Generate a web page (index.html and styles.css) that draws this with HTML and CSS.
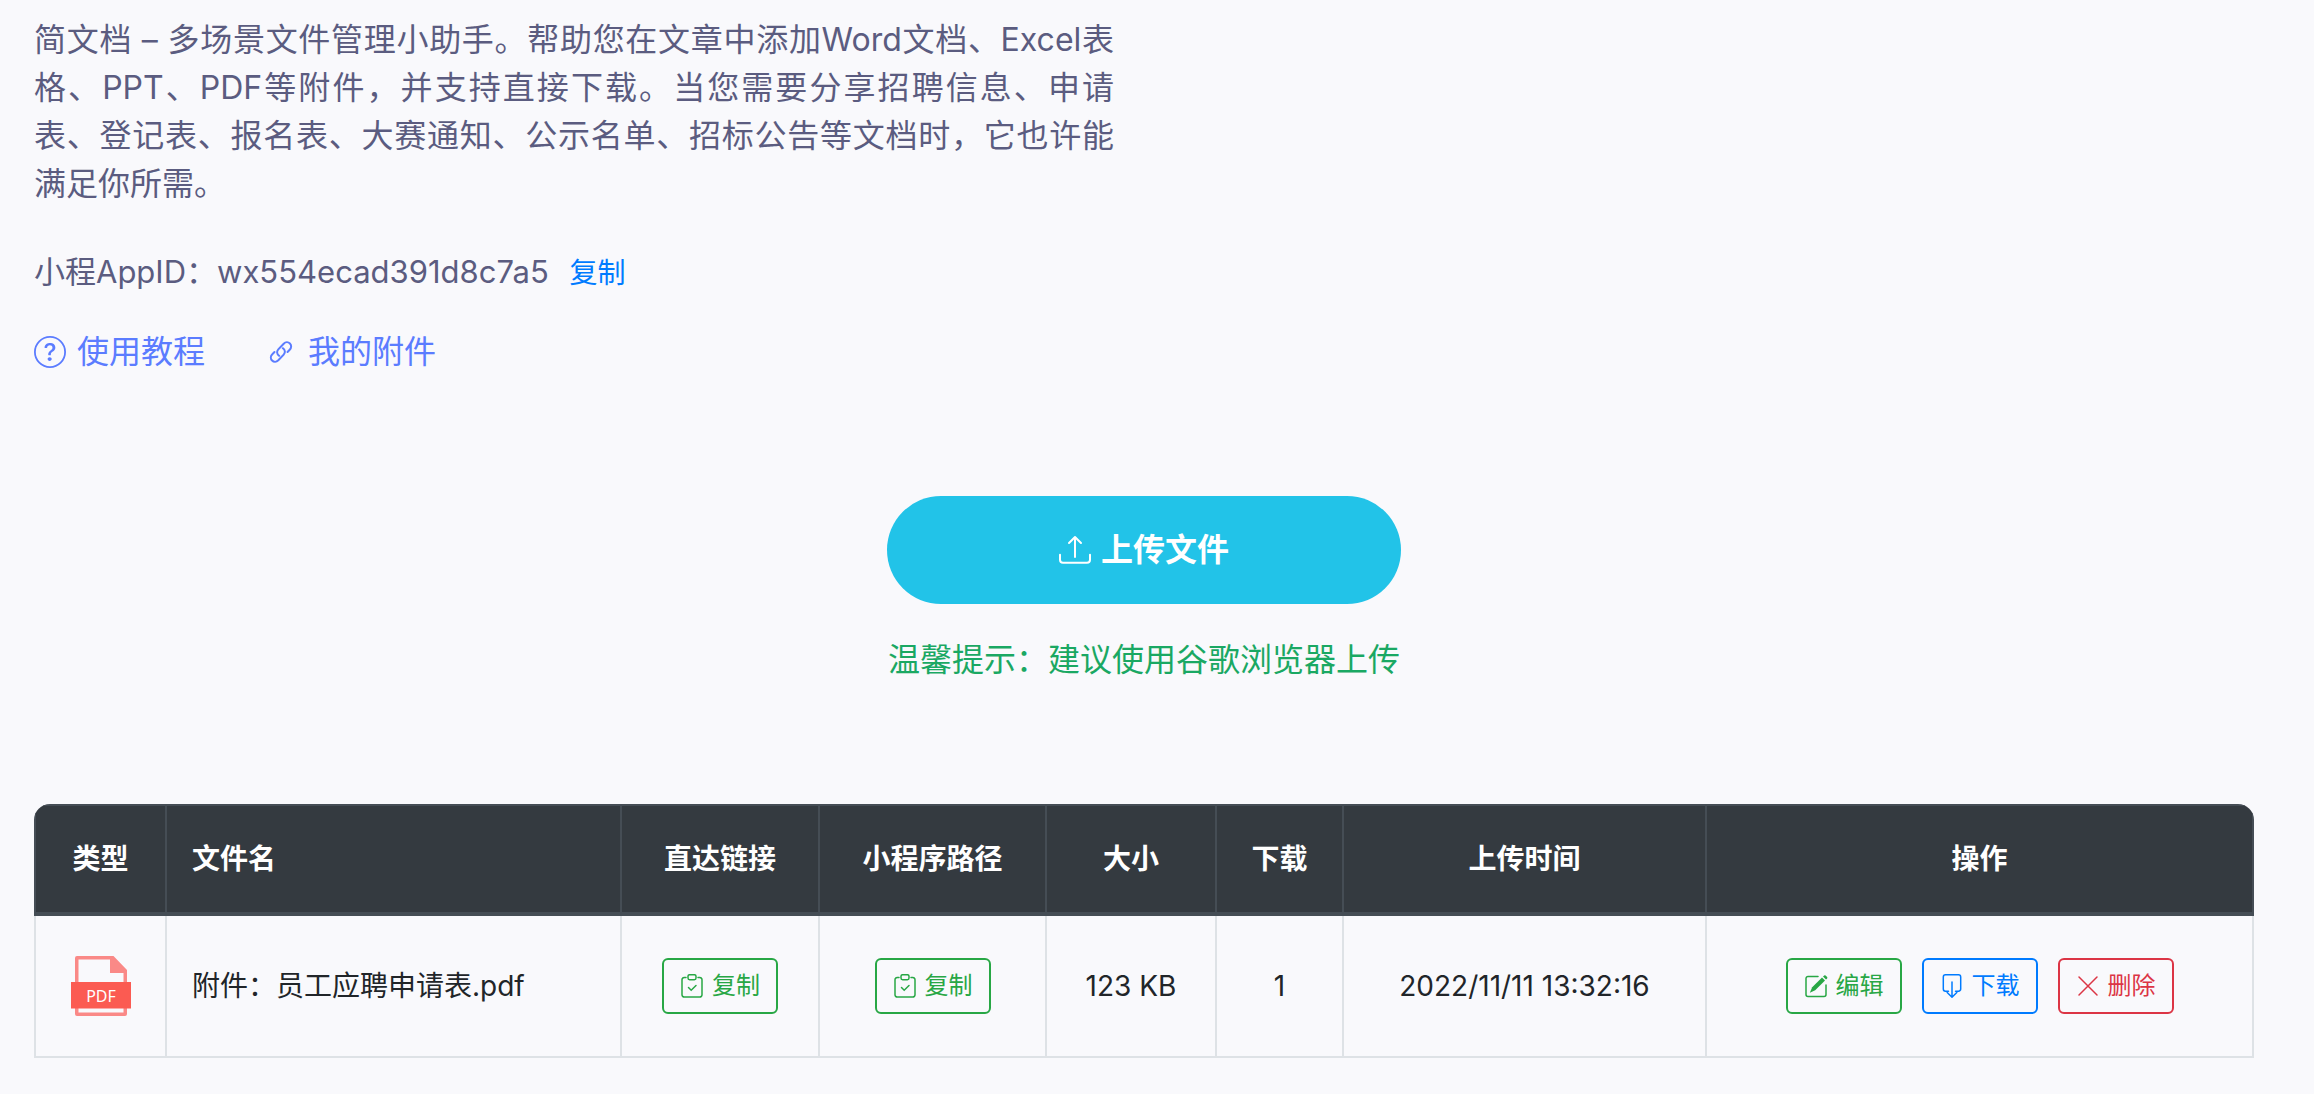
FILE: index.html
```html
<!DOCTYPE html>
<html lang="zh-CN">
<head>
<meta charset="utf-8">
<meta name="viewport" content="width=device-width, initial-scale=1">
<title>简文档</title>
<link rel="stylesheet" href="styles.css">
</head>
<body>
<svg class="sprite" aria-hidden="true">
  <symbol id="i-clipboard" viewBox="0 0 24 24">
    <path d="M6 3.500H4.200A2.200 2.200 0 0 0 2 5.700v15.100A2.200 2.200 0 0 0 4.200 23h15.600a2.200 2.200 0 0 0 2.200-2.200V5.700A2.200 2.200 0 0 0 19.800 3.500H18"/>
    <rect x="8" y="0.700" width="8" height="5" rx="1.600"/>
    <path d="M8.500 13.500l2.700 2.700L16 11.500"/>
  </symbol>
  <symbol id="i-edit" viewBox="0 0 24 24">
    <path d="M14 2.500H4A2 2 0 0 0 2 4.500v16a2 2 0 0 0 2 2h16a2 2 0 0 0 2-2V11"/>
    <path class="solid" d="M5.800 18.800l2.400-5.600L18 3.400l3 3L11.200 16.200z"/>
    <path class="solid" d="M19 2.600l1.200-1.200q.7-.5 1.400.1l1.500 1.500q.6.7 0 1.400L22 5.600z"/>
  </symbol>
  <symbol id="i-download" viewBox="0 0 24 24">
    <path d="M8.500 17.200H5.500a2.200 2.200 0 0 1-2.200-2.200V3A2.200 2.200 0 0 1 5.500.8h13A2.200 2.200 0 0 1 20.700 3v12a2.200 2.200 0 0 1-2.200 2.200H15.500"/>
    <path d="M12 8v15M7.200 18.500L12 23.200l4.800-4.700"/>
  </symbol>
  <symbol id="i-close" viewBox="0 0 24 24">
    <path d="M3 3l18 18M21 3L3 21"/>
  </symbol>
</svg>

<main class="page">
  <p class="intro">简文档 – 多场景文件管理小助手。帮助您在文章中添加Word文档、Excel表格、PPT、PDF等附件，并支持直接下载。当您需要分享招聘信息、申请表、登记表、报名表、大赛通知、公示名单、招标公告等文档时，它也许能满足你所需。</p>

  <p class="appid">小程AppID：wx554ecad391d8c7a5 <a class="copy-link" href="#">复制</a></p>

  <nav class="links">
    <a href="#">
      <svg class="icon-lg" viewBox="0 0 16 16" aria-hidden="true"><circle cx="8" cy="8" r="7.550" fill="none" stroke="currentColor" stroke-width=".9"/><path fill="currentColor" d="M5.255 5.786a.237.237 0 0 0 .241.247h.825c.138 0 .248-.113.266-.25.09-.656.540-1.134 1.342-1.134.686 0 1.314.343 1.314 1.168 0 .635-.374.927-.965 1.371-.673.489-1.206 1.060-1.168 1.987l.003.217a.25.25 0 0 0 .25.246h.811a.25.25 0 0 0 .25-.25v-.105c0-.718.273-.927 1.010-1.486.609-.463 1.244-.977 1.244-2.056 0-1.511-1.276-2.241-2.673-2.241-1.267 0-2.655.590-2.750 2.286zm1.557 5.763c0 .533.425.927 1.010.927.609 0 1.028-.394 1.028-.927 0-.552-.420-.940-1.029-.940-.584 0-1.009.388-1.009.940z"/></svg>
      <span>使用教程</span>
    </a>
    <a href="#">
      <svg class="icon-lg line" viewBox="0 0 32 32" aria-hidden="true"><path d="M17.800 12.200c2.500 1.500 2.700 4.500.9 6.400l-5.400 5.700c-1.900 1.900-4.500 1.900-6.200.2s-1.700-4.300.2-6.200l2.200-2.300"/><path d="M14.200 19.800c-2.500-1.500-2.700-4.500-.9-6.400l5.400-5.700c1.900-1.900 4.500-1.900 6.200-.2s1.700 4.300-.2 6.200l-2.200 2.300"/></svg>
      <span>我的附件</span>
    </a>
  </nav>

  <section class="upload">
    <button class="upload-button" type="button">
      <svg class="icon-lg" viewBox="0 0 16 16" fill="currentColor" aria-hidden="true"><path d="M.5 9.900a.5.5 0 0 1 .5.5v2.500a1 1 0 0 0 1 1h12a1 1 0 0 0 1-1v-2.500a.5.5 0 0 1 1 0v2.500a2 2 0 0 1-2 2H2a2 2 0 0 1-2-2v-2.500a.5.5 0 0 1 .5-.5z"/><path d="M7.646 1.146a.5.5 0 0 1 .708 0l3 3a.5.5 0 0 1-.708.708L8.500 2.707V11.500a.5.5 0 0 1-1 0V2.707L5.354 4.854a.5.5 0 1 1-.708-.708l3-3z"/></svg>
      <span>上传文件</span>
    </button>
    <p class="hint">温馨提示：建议使用谷歌浏览器上传</p>
  </section>

  <div class="table-wrap">
    <table class="files">
      <colgroup>
        <col class="c-type"><col><col class="c-link"><col class="c-path"><col class="c-size"><col class="c-count"><col class="c-time"><col class="c-actions">
      </colgroup>
      <thead>
        <tr>
          <th scope="col">类型</th>
          <th scope="col" class="name">文件名</th>
          <th scope="col">直达链接</th>
          <th scope="col">小程序路径</th>
          <th scope="col">大小</th>
          <th scope="col">下载</th>
          <th scope="col">上传时间</th>
          <th scope="col">操作</th>
        </tr>
      </thead>
      <tbody>
        <tr>
          <td>
            <svg class="pdf" viewBox="0 0 60 60" role="img" aria-label="PDF">
              <path fill="#fa8987" fill-rule="evenodd" d="M6 0h36.500L56 14v44a2 2 0 0 1-2 2H6a2 2 0 0 1-2-2V2a2 2 0 0 1 2-2zM7.500 3.500v53h45V17H39V3.500z"/>
              <path fill="#fb5b52" d="M0 26h60v26.500H0z"/>
              <text class="pdf-text" x="30" y="46" text-anchor="middle">PDF</text>
            </svg>
          </td>
          <td class="name">附件：员工应聘申请表.pdf</td>
          <td><button class="btn green" type="button"><svg class="icon" aria-hidden="true"><use href="#i-clipboard"/></svg><span>复制</span></button></td>
          <td><button class="btn green" type="button"><svg class="icon" aria-hidden="true"><use href="#i-clipboard"/></svg><span>复制</span></button></td>
          <td>123 KB</td>
          <td>1</td>
          <td>2022/11/11 13:32:16</td>
          <td>
            <div class="actions">
              <button class="btn green" type="button"><svg class="icon" aria-hidden="true"><use href="#i-edit"/></svg><span>编辑</span></button>
              <button class="btn blue" type="button"><svg class="icon" aria-hidden="true"><use href="#i-download"/></svg><span>下载</span></button>
              <button class="btn red" type="button"><svg class="icon" aria-hidden="true"><use href="#i-close"/></svg><span>删除</span></button>
            </div>
          </td>
        </tr>
      </tbody>
    </table>
  </div>
</main>
</body>
</html>
```
FILE: styles.css
```css
* {
  box-sizing: border-box;
}

body {
  margin: 0;
  background: #f9f9fc;
  color: #212529;
  font-family: Inter, "Noto Sans CJK SC", sans-serif;
  font-size: 28px;
  line-height: 40px;
}

p {
  margin: 0;
}

a {
  text-decoration: none;
}

button {
  font: inherit;
  cursor: pointer;
}

.sprite {
  display: none;
}

.page {
  padding: 16px 60px 36px 34px;
}

.intro,
.appid {
  color: #5b5c80;
  font-size: 32px;
  line-height: 48px;
}

.intro {
  max-width: 1080px;
  text-align: justify;
}

.appid {
  margin-top: 40px;
  font-size: 31px;
}

.copy-link {
  margin-left: 12px;
  color: #007bff;
  font-size: 28px;
  line-height: 28px;
}

.links {
  display: flex;
  gap: 60px;
  margin-top: 32px;
  font-size: 32px;
  line-height: 48px;
}

.links a {
  display: flex;
  align-items: center;
  gap: 11px;
  color: #5b7cff;
}

.icon-lg {
  width: 32px;
  height: 32px;
}

.line {
  fill: none;
  stroke: currentColor;
  stroke-width: 2;
  stroke-linecap: round;
}

.upload {
  display: flex;
  flex-direction: column;
  align-items: center;
  margin-top: 120px;
}

.upload-button {
  display: flex;
  align-items: center;
  justify-content: center;
  gap: 10px;
  width: 514px;
  height: 108px;
  border: 0;
  border-radius: 54px;
  background: #22c3e8;
  color: #fff;
  font-size: 32px;
  font-weight: 700;
}

.hint {
  margin-top: 32px;
  color: #1aa863;
  font-size: 32px;
  line-height: 48px;
}

.table-wrap {
  margin-top: 120px;
  border-radius: 16px 16px 0 0;
  overflow: hidden;
}

.files {
  width: 100%;
  border-collapse: collapse;
  table-layout: fixed;
  text-align: center;
}

.c-type { width: 131px; }
.c-link { width: 198px; }
.c-path { width: 227px; }
.c-size { width: 170px; }
.c-count { width: 127px; }
.c-time { width: 363px; }
.c-actions { width: 547px; }

.files th,
.files td {
  padding: 0;
  border: 2px solid #dee2e6;
  vertical-align: middle;
}

.files th {
  height: 109px;
  border-color: #454d55;
  border-bottom-width: 4px;
  background: #343a40;
  color: #fff;
  font-weight: 700;
}

.files td {
  height: 143px;
}

.files .name {
  padding-left: 25px;
  text-align: left;
}

.pdf {
  display: block;
  width: 60px;
  height: 60px;
  margin: 0 auto;
}

.pdf-text {
  fill: #fff;
  font-family: "Noto Sans", sans-serif;
  font-size: 16px;
}

.actions {
  display: flex;
  justify-content: center;
  gap: 20px;
}

.btn {
  display: inline-flex;
  align-items: center;
  gap: 8px;
  height: 56px;
  padding: 0 16px;
  border: 2px solid currentColor;
  border-radius: 6px;
  background: transparent;
  font-size: 24px;
  line-height: 36px;
  vertical-align: middle;
}

.green { color: #28a745; }
.blue { color: #007bff; }
.red { color: #dc3545; }

.icon {
  width: 24px;
  height: 24px;
  fill: none;
  stroke: currentColor;
  stroke-width: 1.5;
  stroke-linecap: round;
}

.solid {
  fill: currentColor;
  stroke: none;
}
```
